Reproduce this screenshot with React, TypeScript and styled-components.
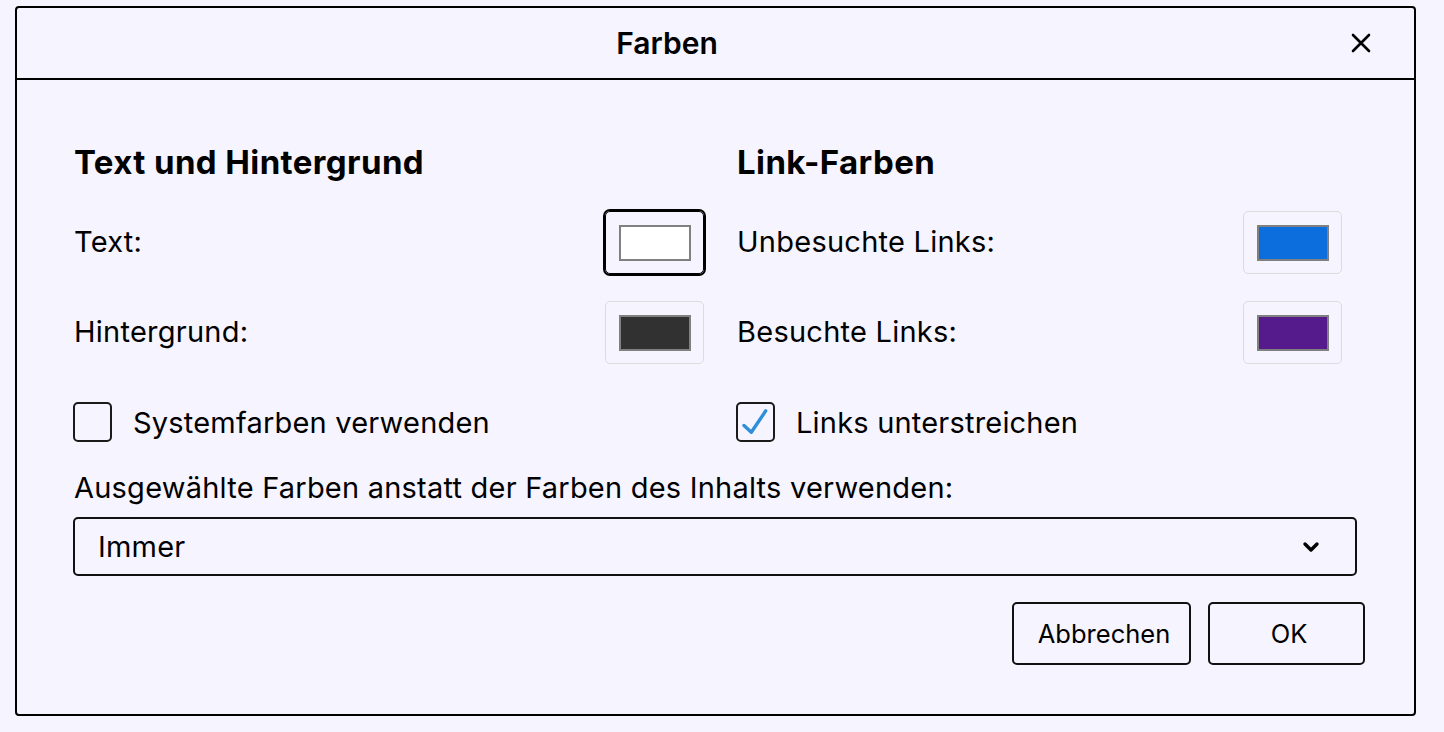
import React from "react";
import styled, { createGlobalStyle } from "styled-components";

const GlobalStyle = createGlobalStyle`
  html, body {
    margin: 0;
    padding: 0;
    background: #f6f4ff;
  }
  body {
    font-family: Inter, "Noto Sans", "Liberation Sans", sans-serif;
    color: #000;
  }
  * { box-sizing: border-box; }
`;

const Page = styled.div`
  width: 1444px;
  height: 732px;
  padding: 6px 0 0 15px;
  background: #f6f4ff;
`;

const Dialog = styled.div`
  width: 1401px;
  border: 2px solid #000;
  border-radius: 4px;
  background: #f6f4ff;
  display: flex;
  flex-direction: column;
`;

const Header = styled.div`
  height: 72px;
  border-bottom: 2px solid #000;
  display: flex;
  align-items: center;
  padding-right: 9px;
`;

const Title = styled.h1`
  flex: 1;
  margin: 0;
  text-align: center;
  font-size: 30px;
  font-weight: 600;
  line-height: 36px;
  letter-spacing: 0;
`;

const CloseButton = styled.button`
  width: 88px;
  height: 70px;
  border: none;
  background: transparent;
  padding: 0;
  display: flex;
  align-items: center;
  justify-content: center;
  cursor: pointer;
`;

const Body = styled.div`
  padding: 62px 57px 49px 56px;
  display: flex;
  flex-direction: column;
`;

const Columns = styled.div`
  display: grid;
  grid-template-columns: 631px 606px;
  column-gap: 32px;
`;

const Column = styled.div`
  display: flex;
  flex-direction: column;
`;

const Heading = styled.h2`
  margin: 0 0 29px 0;
  font-size: 33px;
  font-weight: 700;
  line-height: 40px;
  height: 40px;
  padding-left: 1px;
  letter-spacing: 0.4px;
`;

const ColorRow = styled.div`
  display: flex;
  align-items: center;
  justify-content: space-between;
  height: 63px;
  & + & {
    margin-top: 27px;
  }
`;

const RowLabel = styled.span`
  font-size: 29px;
  line-height: 35px;
  padding-bottom: 3px;
  padding-left: 1px;
  letter-spacing: 0.25px;
`;

const SwatchButton = styled.button<{ $focused?: boolean }>`
  width: 99px;
  height: 63px;
  padding: 0;
  border: 1px solid ${(p) => (p.$focused ? "#000" : "#dcdcdc")};
  outline: ${(p) => (p.$focused ? "2px solid #000" : "none")};
  outline-offset: 0;
  border-radius: 5px;
  background: transparent;
  display: flex;
  align-items: center;
  justify-content: center;
`;

const Swatch = styled.span<{ $color: string }>`
  display: block;
  width: 72px;
  height: 36px;
  border: 2px solid #808080;
  background: ${(p) => p.$color};
`;

const CheckRow = styled.label`
  display: flex;
  align-items: center;
  gap: 21px;
  height: 40px;
  margin-top: 38px;
  font-size: 29px;
  line-height: 35px;
  letter-spacing: 0.2px;
`;

const CheckBox = styled.span`
  width: 39px;
  height: 40px;
  border: 2px solid #1a1a1a;
  border-radius: 5px;
  display: flex;
  flex: none;
`;

const CheckWrap = styled.span`
  position: relative;
  width: 39px;
  height: 40px;
  display: flex;
  flex: none;
`;

const FieldLabel = styled.div`
  margin-top: 28px;
  font-size: 29px;
  line-height: 35px;
  padding-left: 1px;
  letter-spacing: 0.22px;
`;

const Select = styled.div`
  margin-top: 12px;
  height: 59px;
  border: 2px solid #111;
  border-radius: 5px;
  display: flex;
  align-items: center;
  justify-content: space-between;
  padding: 0 35px 0 23px;
  font-size: 29px;
  line-height: 35px;
  letter-spacing: 0.2px;
`;

const ButtonRow = styled.div`
  margin-top: 26px;
  margin-right: -8px;
  display: flex;
  justify-content: flex-end;
  gap: 17px;
`;

const DialogButton = styled.button<{ $width: number }>`
  width: ${(p) => p.$width}px;
  height: 63px;
  border: 2px solid #111;
  border-radius: 5px;
  background: transparent;
  font-family: Inter, "Noto Sans", "Liberation Sans", sans-serif;
  font-size: 25.5px;
  color: #000;
  padding: 0 0 0 5px;
  display: flex;
  align-items: center;
  justify-content: center;
`;

const CloseIcon = () => (
  <svg width="20" height="20" viewBox="0 0 20 20">
    <path d="M2 2 L18 18 M18 2 L2 18" stroke="#000" strokeWidth="2.6" strokeLinecap="round" fill="none" />
  </svg>
);

const CheckIcon = () => (
  <svg width="39" height="40" viewBox="0 0 39 40" style={{ position: "absolute" }}>
    <path d="M8 23.5 L15.3 30.3 L29.7 8.9" stroke="#2d8fda" strokeWidth="3.4" strokeLinecap="round" strokeLinejoin="round" fill="none" />
  </svg>
);

const Chevron = () => (
  <svg width="18" height="12" viewBox="0 0 18 12">
    <path d="M3 3 L9 9 L15 3" stroke="#000" strokeWidth="3.4" strokeLinecap="round" strokeLinejoin="round" fill="none" />
  </svg>
);

export default function App() {
  return (
    <>
      <GlobalStyle />
      <Page>
        <Dialog>
          <Header>
            <Title>Farben</Title>
            <CloseButton aria-label="Schließen">
              <CloseIcon />
            </CloseButton>
          </Header>
          <Body>
            <Columns>
              <Column>
                <Heading>Text und Hintergrund</Heading>
                <ColorRow>
                  <RowLabel>Text:</RowLabel>
                  <SwatchButton $focused>
                    <Swatch $color="#ffffff" />
                  </SwatchButton>
                </ColorRow>
                <ColorRow>
                  <RowLabel>Hintergrund:</RowLabel>
                  <SwatchButton>
                    <Swatch $color="#313131" />
                  </SwatchButton>
                </ColorRow>
                <CheckRow>
                  <CheckWrap>
                    <CheckBox />
                  </CheckWrap>
                  Systemfarben verwenden
                </CheckRow>
              </Column>
              <Column>
                <Heading>Link-Farben</Heading>
                <ColorRow>
                  <RowLabel>Unbesuchte Links:</RowLabel>
                  <SwatchButton>
                    <Swatch $color="#0b6edc" />
                  </SwatchButton>
                </ColorRow>
                <ColorRow>
                  <RowLabel>Besuchte Links:</RowLabel>
                  <SwatchButton>
                    <Swatch $color="#551a8b" />
                  </SwatchButton>
                </ColorRow>
                <CheckRow>
                  <CheckWrap>
                    <CheckBox />
                    <CheckIcon />
                  </CheckWrap>
                  Links unterstreichen
                </CheckRow>
              </Column>
            </Columns>
            <FieldLabel>Ausgewählte Farben anstatt der Farben des Inhalts verwenden:</FieldLabel>
            <Select>
              <span>Immer</span>
              <Chevron />
            </Select>
            <ButtonRow>
              <DialogButton $width={179}>Abbrechen</DialogButton>
              <DialogButton $width={157}>OK</DialogButton>
            </ButtonRow>
          </Body>
        </Dialog>
      </Page>
    </>
  );
}
